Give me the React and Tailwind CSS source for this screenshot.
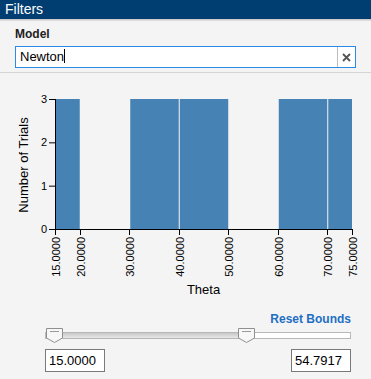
import React from 'react';

const bins = [
  { x0: 15, x1: 20, n: 3 },
  { x0: 30, x1: 40, n: 3 },
  { x0: 40, x1: 50, n: 3 },
  { x0: 60, x1: 70, n: 3 },
  { x0: 70, x1: 75, n: 3 },
];
const xTicks = [15, 20, 30, 40, 50, 60, 70, 75];
const yTicks = [0, 1, 2, 3];

const sx = (v) => 55 + ((v - 15) / 60) * 297;
const sy = (v) => 229 - (v / 3) * 130;

function Histogram() {
  return (
    <svg width="371" height="227" viewBox="0 73 371 227" className="block" style={{ fontFamily: '"Liberation Sans", Arial, sans-serif' }}>
      {bins.map((b, i) => (
        <rect key={i} x={sx(b.x0) + 1} y={sy(b.n)} width={sx(b.x1) - sx(b.x0) - 1} height={229 - sy(b.n)} fill="#4682b4" />
      ))}
      <line x1="55.5" y1="99" x2="55.5" y2="229.5" stroke="#000" />
      <line x1="55" y1="229.5" x2="352" y2="229.5" stroke="#000" />
      {yTicks.map((t) => (
        <g key={t}>
          <line x1="49" y1={sy(t) + 0.5} x2="55" y2={sy(t) + 0.5} stroke="#000" />
          <text x="47" y={sy(t) + 4} textAnchor="end" fontSize="11" fill="#000">{t}</text>
        </g>
      ))}
      {xTicks.map((t) => (
        <g key={t}>
          <line x1={Math.round(sx(t)) + 0.5} y1="229" x2={Math.round(sx(t)) + 0.5} y2="235" stroke="#000" />
          <text transform={`translate(${Math.round(sx(t)) + 4.5}, 237) rotate(-90)`} textAnchor="end" fontSize="11" fill="#000">
            {t.toFixed(4)}
          </text>
        </g>
      ))}
      <text transform="translate(28, 165) rotate(-90)" textAnchor="middle" fontSize="13" fill="#000">Number of Trials</text>
      <text x="203.5" y="294" textAnchor="middle" fontSize="13" fill="#000">Theta</text>
    </svg>
  );
}

function Handle({ left }) {
  return (
    <svg width="17" height="16" viewBox="0 0 17 16" className="absolute top-[-5px]" style={{ left }}>
      <path d="M0.5 0.5 H16.5 V10 L8.5 14.5 L0.5 10 Z" fill="#f7f7f7" stroke="#8f8f8f" />
      <line x1="4" y1="3.5" x2="13" y2="3.5" stroke="#9a9a9a" />
    </svg>
  );
}

export default function App() {
  return (
    <div className="w-[371px] h-[379px] bg-[#f4f4f4] overflow-hidden" style={{ fontFamily: '"Liberation Sans", Arial, sans-serif' }}>
      <div className="h-[19px] bg-[#003e71] px-[5px] text-[14px] leading-[19px] text-white">Filters</div>
      <div className="h-[2px] bg-gradient-to-b from-[#c4c4c4] to-[#e6e6e6]" />
      <div className="px-[15px] pt-[6px]">
        <div className="text-[12px] font-bold leading-[14px] text-[#222]">Model</div>
        <div className="mt-[5px] flex h-[22px] border border-[#2a8ae6] bg-white">
          <div className="flex-1 pl-[4px] text-[13px] leading-[20px] text-black">
            Newton<span className="inline-block w-px h-[14px] bg-black align-[-2px]" />
          </div>
          <div className="w-[18px] border-l border-[#bdbdbd] flex items-center justify-center text-[#555]">
            <svg width="9" height="9" viewBox="0 0 9 9">
              <path d="M1 1 L8 8 M8 1 L1 8" stroke="#555" strokeWidth="1.8" />
            </svg>
          </div>
        </div>
      </div>
      <div className="mt-[4px] h-px bg-[#d4d4d4]" />
      <Histogram />
      <div className="px-[20px] pl-[45px]">
        <div className="text-right text-[12px] font-bold leading-[14px] text-[#1f6fc4] mt-[12px]">Reset Bounds</div>
        <div className="relative mt-[6px] h-[7px] border border-[#b8b8b8] bg-white">
          <div className="absolute left-0 top-0 bottom-0 w-[200px] bg-gradient-to-b from-[#c8c8c8] to-[#e8e8e8]" />
          <Handle left={0} />
          <Handle left={192} />
        </div>
        <div className="mt-[10px] flex justify-between">
          <div className="w-[60px] h-[23px] border border-[#7a7a7a] bg-white pl-[3px] text-[13px] leading-[21px] text-black">15.0000</div>
          <div className="w-[60px] h-[23px] border border-[#7a7a7a] bg-white pl-[3px] text-[13px] leading-[21px] text-black">54.7917</div>
        </div>
      </div>
    </div>
  );
}
